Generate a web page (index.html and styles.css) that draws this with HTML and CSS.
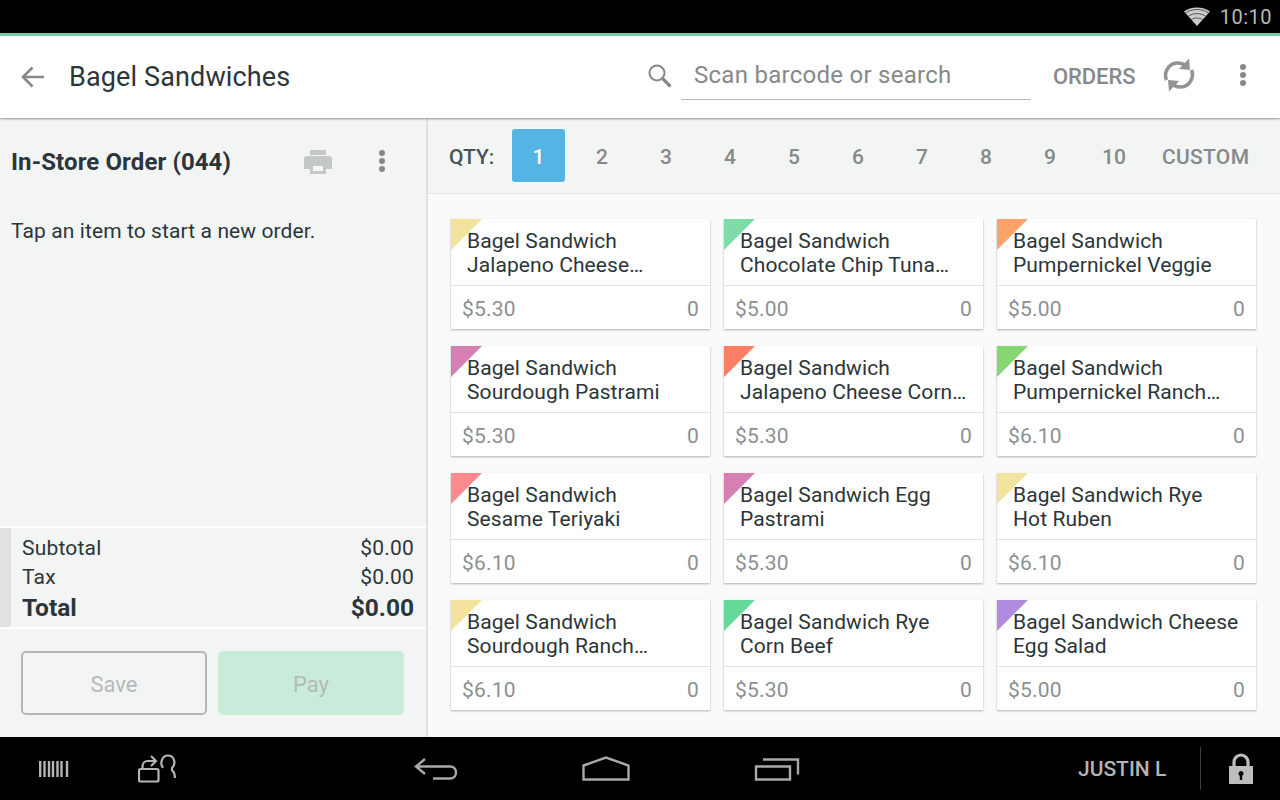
FILE: index.html
```html
<!DOCTYPE html>
<html lang="en">
<head>
    <meta charset="UTF-8">
    <title>Bagel Sandwiches</title>
    <link rel="stylesheet" href="styles.css">
</head>
<body>
    <div class="status-bar">
        <svg class="wifi" width="26" height="20" viewBox="0 0 26 20"><path d="M13 19 0 4.500C3.500 1.800 8 .5 13 .5s9.500 1.300 13 4z" fill="#cacaca"/><path d="M1.500 6C5 3.500 8.800 2.500 13 2.500s8 1 11.500 3.500M4.200 9.300C6.800 7.500 9.700 6.600 13 6.600s6.200.9 8.800 2.700M7.200 12.600C8.800 11.600 10.800 11 13 11s4.200.6 5.800 1.600" fill="none" stroke="#3a3a3a" stroke-width="0.800"/></svg>
        <span class="clock">10:10</span>
    </div>
    <header class="toolbar">
        <svg class="back-icon" width="26" height="24" viewBox="0 0 26 24"><path d="M24 12H3M12.500 2.500 3 12l9.500 9.500" fill="none" stroke="#85898b" stroke-width="2.600"/></svg>
        <h1 class="title">Bagel Sandwiches</h1>
        <svg class="search-icon" width="26" height="26" viewBox="0 0 26 26"><circle cx="10" cy="10" r="7.500" fill="none" stroke="#85898b" stroke-width="2"/><path d="m15.500 15.500 8 8" stroke="#85898b" stroke-width="3.200"/></svg>
        <div class="search-box">Scan barcode or search</div>
        <span class="orders">ORDERS</span>
        <svg class="sync-icon" width="32" height="34" viewBox="0 0 32 34"><path d="M3.500 22C.5 15 5 5.500 14 5c3-.2 5.500.6 7.500 2" fill="none" stroke="#909495" stroke-width="3.600"/><path d="M26 .5 27 12l-11-1z" fill="#909495"/><path d="M28.500 12c3 7-1.500 16.500-10.500 17-3 .2-5.500-.6-7.500-2" fill="none" stroke="#909495" stroke-width="3.600"/><path d="M6 33.500 5 22l11 1z" fill="#909495"/></svg>
        <div class="dots dots-dark"><i></i><i></i><i></i></div>
    </header>
    <main class="content">
        <aside class="order-panel">
            <div class="order-head">
                <h2 class="order-title">In-Store Order (044)</h2>
                <svg class="print-icon" width="28" height="26" viewBox="0 0 28 26"><path d="M6 1h16v5H6zM3 7h22a3 3 0 0 1 3 3v10h-6v5H6v-5H0V10a3 3 0 0 1 3-3zm6 10v5h10v-5z" fill="#c3c7c8" fill-rule="evenodd"/></svg>
                <div class="dots"><i></i><i></i><i></i></div>
            </div>
            <p class="order-hint">Tap an item to start a new order.</p>
            <div class="totals">
                <div class="totals-inner">
                    <div class="total-row"><span>Subtotal</span><span>$0.00</span></div>
                    <div class="total-row"><span>Tax</span><span>$0.00</span></div>
                    <div class="total-row total-big"><span>Total</span><span>$0.00</span></div>
                </div>
            </div>
            <div class="order-actions">
                <button class="btn btn-save">Save</button>
                <button class="btn btn-pay">Pay</button>
            </div>
        </aside>
        <section class="menu">
            <div class="qty-bar">
                <span class="qty-label">QTY:</span>
                <span class="qty qty-on">1</span>
                <span class="qty">2</span>
                <span class="qty">3</span>
                <span class="qty">4</span>
                <span class="qty">5</span>
                <span class="qty">6</span>
                <span class="qty">7</span>
                <span class="qty">8</span>
                <span class="qty">9</span>
                <span class="qty">10</span>
                <span class="qty-custom">CUSTOM</span>
            </div>
            <div class="grid">
                <div class="card"><i class="tag tag-yellow"></i><div class="card-name">Bagel Sandwich Jalapeno Cheese…</div><div class="card-foot"><span>$5.30</span><span>0</span></div></div>
                <div class="card"><i class="tag tag-mint"></i><div class="card-name">Bagel Sandwich Chocolate Chip Tuna…</div><div class="card-foot"><span>$5.00</span><span>0</span></div></div>
                <div class="card"><i class="tag tag-orange"></i><div class="card-name">Bagel Sandwich Pumpernickel Veggie</div><div class="card-foot"><span>$5.00</span><span>0</span></div></div>
                <div class="card"><i class="tag tag-pink"></i><div class="card-name">Bagel Sandwich Sourdough Pastrami</div><div class="card-foot"><span>$5.30</span><span>0</span></div></div>
                <div class="card"><i class="tag tag-coral"></i><div class="card-name">Bagel Sandwich Jalapeno Cheese Corn…</div><div class="card-foot"><span>$5.30</span><span>0</span></div></div>
                <div class="card"><i class="tag tag-green"></i><div class="card-name">Bagel Sandwich Pumpernickel Ranch…</div><div class="card-foot"><span>$6.10</span><span>0</span></div></div>
                <div class="card"><i class="tag tag-salmon"></i><div class="card-name">Bagel Sandwich Sesame Teriyaki</div><div class="card-foot"><span>$6.10</span><span>0</span></div></div>
                <div class="card"><i class="tag tag-pink"></i><div class="card-name">Bagel Sandwich Egg Pastrami</div><div class="card-foot"><span>$5.30</span><span>0</span></div></div>
                <div class="card"><i class="tag tag-yellow"></i><div class="card-name">Bagel Sandwich Rye Hot Ruben</div><div class="card-foot"><span>$6.10</span><span>0</span></div></div>
                <div class="card"><i class="tag tag-yellow"></i><div class="card-name">Bagel Sandwich Sourdough Ranch…</div><div class="card-foot"><span>$6.10</span><span>0</span></div></div>
                <div class="card"><i class="tag tag-teal"></i><div class="card-name">Bagel Sandwich Rye Corn Beef</div><div class="card-foot"><span>$5.30</span><span>0</span></div></div>
                <div class="card"><i class="tag tag-purple"></i><div class="card-name">Bagel Sandwich Cheese Egg Salad</div><div class="card-foot"><span>$5.00</span><span>0</span></div></div>
            </div>
        </section>
    </main>
    <footer class="nav-bar">
        <svg class="nav-barcode" width="30" height="16" viewBox="0 0 30 16"><path d="M1.200 0v16M5.500 0v16M10 0v16M14 0v16M18.500 0v16M22.500 0v16M28 0v16" stroke="#b5b5b5" stroke-width="2.400"/></svg>
        <svg class="nav-switch" width="40" height="32" viewBox="0 0 40 32"><path d="M1 27V17.500a1.500 1.500 0 0 1 1.500-1.500H19a1.500 1.500 0 0 1 1.500 1.500V27a1.500 1.500 0 0 1-1.500 1.500H2.500A1.500 1.500 0 0 1 1 27zM4.500 16v-2.500c0-3 2-5.500 5-5.500H17" fill="none" stroke="#b5b5b5" stroke-width="2.200"/><path d="m13 3 5 5-5 5" fill="none" stroke="#b5b5b5" stroke-width="2.200"/><path d="M25 15c-2-3-2-6-1-8 1-3 3-4.500 6-4.500s5 1.500 6 4.500c1 3 0 6-2 8v2c2 2 3 4 3 8" fill="none" stroke="#b5b5b5" stroke-width="2.200"/></svg>
        <svg class="nav-back" width="44" height="24" viewBox="0 0 44 24"><path d="M11 2 2 9.500l9 7.500M2 9.500h34c8 0 8 12 0 12H19" fill="none" stroke="#a9a9a9" stroke-width="2.400"/></svg>
        <svg class="nav-home" width="48" height="26" viewBox="0 0 48 26"><path d="M1.500 9.500 24 1.500l22.500 8v14h-45z" fill="none" stroke="#a9a9a9" stroke-width="2.400"/></svg>
        <svg class="nav-recent" width="46" height="24" viewBox="0 0 46 24"><path d="M2 9.500h34v13H2zM9 2.500h35v15" fill="none" stroke="#a9a9a9" stroke-width="2.400"/></svg>
        <span class="user-name">JUSTIN L</span>
        <span class="nav-sep"></span>
        <svg class="nav-lock" width="26" height="32" viewBox="0 0 26 32"><path d="M6 14V9a7 7 0 0 1 14 0v5" fill="none" stroke="#bdbdbd" stroke-width="3.200"/><path d="M1 13h24v18H1zM13 18a2.500 2.500 0 0 0-1.200 4.700V27h2.400v-4.300A2.500 2.500 0 0 0 13 18z" fill="#bdbdbd" fill-rule="evenodd"/></svg>
    </footer>
</body>
</html>
```

FILE: styles.css
```css
/* page frame */
html, body {
    height: 100%;
}

body {
    display: flex;
    flex-direction: column;
    width: 1280px;
    height: 800px;
    margin: 0;
    overflow: hidden;
    font-family: Roboto, "Liberation Sans", sans-serif;
    color: #2c3539;
    background-color: #fafafa;
}

.status-bar {
    display: flex;
    align-items: center;
    justify-content: flex-end;
    flex: none;
    height: 33px;
    padding-right: 8px;
    box-sizing: border-box;
    background-color: #000;
}

.wifi {
    margin-right: 10px;
}

.clock {
    font-size: 20px;
    letter-spacing: 0.5px;
    color: #b8b8b8;
}

/* toolbar */
.toolbar {
    position: relative;
    z-index: 2;
    display: flex;
    align-items: center;
    flex: none;
    height: 85px;
    border-top: 3px solid #74d09e;
    box-sizing: border-box;
    background-color: #fff;
    box-shadow: 0 1px 2px rgba(0, 0, 0, 0.4);
}

.back-icon {
    margin-left: 20px;
}

.title {
    width: 578px;
    margin: 0 0 0 23px;
    font-size: 27px;
    font-weight: 400;
    letter-spacing: 0.13px;
}

.search-icon {
    margin-top: -3px;
}

.search-box {
    width: 350px;
    height: 46px;
    margin-left: 8px;
    padding: 5px 0 0 13px;
    border-bottom: 1px solid #b5b8b9;
    box-sizing: border-box;
    font-size: 24px;
    letter-spacing: 0.27px;
    line-height: 32px;
    color: #85898b;
}

.orders {
    margin: -2px 0 0 22px;
    font-size: 22px;
    font-weight: 500;
    letter-spacing: -0.1px;
    color: #85898b;
}

.sync-icon {
    margin: -5px 0 0 28px;
}

.dots {
    display: flex;
    flex-direction: column;
    gap: 2px;
}

.dots i {
    width: 6px;
    height: 6px;
    border-radius: 50%;
    background-color: #85898b;
}

.dots-dark {
    margin: -4px 0 0 45px;
}

/* left column */
.content {
    display: flex;
    flex: 1;
    min-height: 0;
}

.order-panel {
    display: flex;
    flex-direction: column;
    flex: none;
    width: 428px;
    border-right: 2px solid #e0e2e2;
    box-sizing: border-box;
    background-color: #f3f5f5;
}

.order-head {
    display: flex;
    align-items: center;
    height: 87px;
    padding-left: 11px;
    box-sizing: border-box;
}

.order-title {
    width: 293px;
    margin: 0;
    font-size: 24px;
    font-weight: 700;
    letter-spacing: 0.1px;
}

.print-icon {
    flex: none;
}

.order-head .dots {
    margin: -1px 0 0 47px;
}

.order-hint {
    flex: 1;
    margin: 14px 0 0 11px;
    font-size: 21px;
    letter-spacing: 0.1px;
}

.totals {
    height: 103px;
    border-top: 2px solid #fff;
    border-bottom: 2px solid #fff;
    box-sizing: border-box;
}

.totals-inner {
    height: 99px;
    padding: 6px 12px 0 11px;
    border-left: 11px solid #dfe1e2;
    box-sizing: border-box;
}

.total-row {
    display: flex;
    justify-content: space-between;
    font-size: 21px;
    letter-spacing: 0.2px;
    line-height: 29px;
}

.total-big {
    font-size: 24.500px;
    font-weight: 700;
    letter-spacing: 0;
    line-height: 32px;
}

.order-actions {
    display: flex;
    gap: 11px;
    height: 108px;
    padding: 22px 22px 0 21px;
    box-sizing: border-box;
}

.btn {
    width: 186px;
    height: 64px;
    padding-top: 3px;
    border-radius: 5px;
    font-family: inherit;
    font-size: 22px;
    color: #b5b9ba;
}

.btn-save {
    border: 2px solid #b4b7b8;
    background-color: transparent;
}

.btn-pay {
    border: 0;
    background-color: #c9ecda;
}

/* right column */
.menu {
    flex: 1;
    min-width: 0;
}

.qty-bar {
    display: flex;
    align-items: center;
    height: 76px;
    padding-left: 21px;
    border-bottom: 1px solid #e2e4e4;
    box-sizing: border-box;
    background-color: #f3f5f5;
}

.qty-label {
    width: 63px;
    margin-top: 3px;
    font-size: 21px;
    font-weight: 500;
    color: #4b5256;
}

.qty {
    width: 64px;
    margin-top: 3px;
    font-size: 21px;
    font-weight: 500;
    text-align: center;
    color: #85898b;
}

.qty-on {
    width: 53px;
    height: 53px;
    margin: 0 5px 0 0;
    border-radius: 3px;
    line-height: 56px;
    color: #fff;
    background-color: #54b4e4;
}

.qty-custom {
    margin: 3px 0 0 16px;
    font-size: 21px;
    font-weight: 500;
    letter-spacing: 0.3px;
    color: #85898b;
}

.grid {
    display: grid;
    grid-template-columns: repeat(3, 259px);
    grid-auto-rows: 110px;
    gap: 17px 14px;
    padding: 25px 0 0 23px;
}

.card {
    position: relative;
    display: flex;
    flex-direction: column;
    overflow: hidden;
    background-color: #fff;
    box-shadow: 0 1px 2px rgba(0, 0, 0, 0.3);
}

.tag {
    position: absolute;
    top: 0;
    left: 0;
    width: 31px;
    height: 31px;
    clip-path: polygon(0 0, 100% 0, 0 100%);
}

.tag-yellow { background-color: #f2e49c; }
.tag-mint { background-color: #7fdca9; }
.tag-orange { background-color: #fba36a; }
.tag-pink { background-color: #d67fb2; }
.tag-coral { background-color: #fb7f66; }
.tag-green { background-color: #86d671; }
.tag-salmon { background-color: #fb8a8e; }
.tag-teal { background-color: #64d99a; }
.tag-purple { background-color: #b18be0; }

.card-name {
    height: 67px;
    padding: 10px 16px 0 16px;
    border-bottom: 1px solid #e2e4e4;
    box-sizing: border-box;
    font-size: 21px;
    letter-spacing: 0.1px;
    line-height: 24px;
}

.card-foot {
    display: flex;
    justify-content: space-between;
    align-items: center;
    flex: 1;
    padding: 2px 11px 0;
    font-size: 21px;
    letter-spacing: 0.2px;
    color: #8c9091;
}

/* bottom nav */
.nav-bar {
    position: relative;
    z-index: 2;
    display: flex;
    align-items: center;
    flex: none;
    height: 63px;
    background-color: #000;
}

.nav-barcode {
    margin-left: 39px;
}

.nav-switch {
    margin-left: 69px;
}

.nav-back {
    margin-left: 236px;
}

.nav-home {
    margin-left: 124px;
}

.nav-recent {
    margin-left: 124px;
}

.user-name {
    margin-left: 278px;
    font-size: 21px;
    font-weight: 500;
    color: #b5b5b5;
}

.nav-sep {
    width: 1px;
    height: 43px;
    margin-left: 34px;
    background-color: #3c3c3c;
}

.nav-lock {
    margin-left: 27px;
}
```
